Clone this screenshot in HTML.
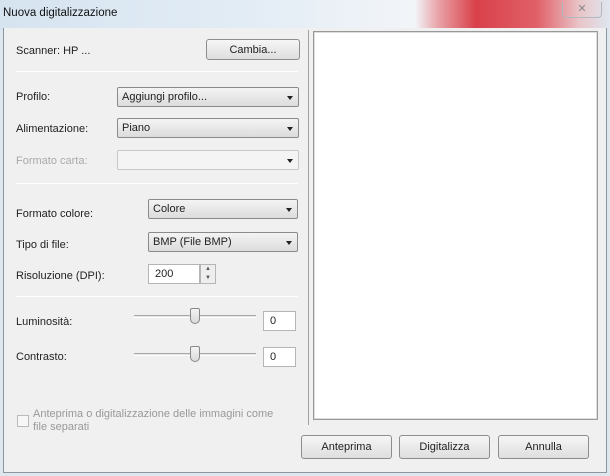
<!DOCTYPE html>
<html><head><meta charset="utf-8"><style>
*{box-sizing:border-box;margin:0;padding:0}
body{width:610px;height:476px;overflow:hidden;font-family:"Liberation Sans",sans-serif;font-size:11px;color:#222;background:#dfe7ee;position:relative}
.a{position:absolute}
.title{left:0;top:0;width:610px;height:30px;background:linear-gradient(90deg,#d6e4f0 0%,#e2ecf5 40%,#f2f5f8 68%,#e8a0a6 72%,#d9414a 78%,#e06068 88%,#e9c5c8 95%,#dfe7f0 100%);}
.win{left:3px;top:28px;width:604px;height:445px;background:#f0f0f0;border:1px solid #8a96a2;border-top:none}
.btn{border:1px solid #8d8d8d;border-radius:3px;background:linear-gradient(#f6f6f6,#dedede);text-align:center;line-height:20px;font-size:11px}
.sel{border:1px solid #8a8a8a;border-radius:2px;background:linear-gradient(#f4f4f4,#dcdcdc);height:20px;line-height:18px;padding-left:4px}
.sel:after{content:"";position:absolute;right:5px;top:8px;border:3.5px solid transparent;border-top:4px solid #222}
.hr{height:1px;background:#c8c8c8;border-bottom:1px solid #fff;left:16px;width:282px}
.inp{background:#fff;border:1px solid #b5b5b5;height:20px;line-height:18px;padding-left:6px}
.track{height:3px;border-top:1px solid #a8a8a8;border-bottom:1px solid #fff;background:#e4e4e4;width:122px;left:134px}
.thumb{width:10px;height:16px;border:1px solid #888;border-radius:2px 2px 5px 5px;background:linear-gradient(#f4f4f4,#dadada)}
</style></head><body>
<div class="a title"></div>
<div class="a" style="left:3px;top:7px;font-size:11.5px;color:#111">Nuova digitalizzazione</div>
<div class="a" style="left:562px;top:2px;width:40px;height:16px;border:1px solid #b0b8c0;border-top:none;border-radius:0 0 4px 4px;text-align:center;color:#888;font-size:11px;line-height:14px">✕</div>
<div class="a win"></div>
<div class="a" style="left:16px;top:45px">Scanner: HP ...</div>
<div class="a btn" style="left:206px;top:39px;width:94px;height:21px">Cambia...</div>
<div class="a hr" style="top:71px"></div>
<div class="a" style="left:16px;top:91px">Profilo:</div>
<div class="a sel" style="left:117px;top:87px;width:182px">Aggiungi profilo...</div>
<div class="a" style="left:16px;top:123px">Alimentazione:</div>
<div class="a sel" style="left:117px;top:118px;width:182px">Piano</div>
<div class="a" style="left:16px;top:155px;color:#aaa">Formato carta:</div>
<div class="a sel" style="left:117px;top:150px;width:182px;background:#f4f4f4;border-color:#c8c8c8"></div>
<div class="a hr" style="top:183px"></div>
<div class="a" style="left:16px;top:208px">Formato colore:</div>
<div class="a sel" style="left:148px;top:199px;width:150px">Colore</div>
<div class="a" style="left:16px;top:239px">Tipo di file:</div>
<div class="a sel" style="left:148px;top:232px;width:150px">BMP (File BMP)</div>
<div class="a" style="left:16px;top:270px">Risoluzione (DPI):</div>
<div class="a inp" style="left:148px;top:264px;width:52px">200</div>
<div class="a" style="left:200px;top:264px;width:16px;height:20px;border:1px solid #b5b5b5;background:#eee;font-size:6px;line-height:9px;text-align:center;color:#555">▲<br>▼</div>
<div class="a hr" style="top:296px"></div>
<div class="a" style="left:16px;top:316px">Luminosità:</div>
<div class="a track" style="top:315px"></div>
<div class="a thumb" style="left:190px;top:308px"></div>
<div class="a inp" style="left:263px;top:311px;width:33px">0</div>
<div class="a" style="left:16px;top:351px">Contrasto:</div>
<div class="a track" style="top:353px"></div>
<div class="a thumb" style="left:190px;top:346px"></div>
<div class="a inp" style="left:263px;top:347px;width:33px">0</div>
<div class="a" style="left:17px;top:415px;width:12px;height:12px;border:1px solid #bbb;background:#f7f7f7"></div>
<div class="a" style="left:33px;top:408px;color:#999;line-height:13px">Anteprima o digitalizzazione delle immagini come<br>file separati</div>
<div class="a" style="left:308px;top:30px;width:1px;height:395px;background:#a0a0a0"></div>
<div class="a" style="left:313px;top:31px;width:285px;height:389px;background:#fff;border:1px solid #999;box-shadow:inset 0 0 0 1px #ddd"></div>
<div class="a btn" style="left:301px;top:435px;width:91px;height:24px;line-height:22px">Anteprima</div>
<div class="a btn" style="left:399px;top:435px;width:91px;height:24px;line-height:22px">Digitalizza</div>
<div class="a btn" style="left:498px;top:435px;width:91px;height:24px;line-height:22px">Annulla</div>
</body></html>
